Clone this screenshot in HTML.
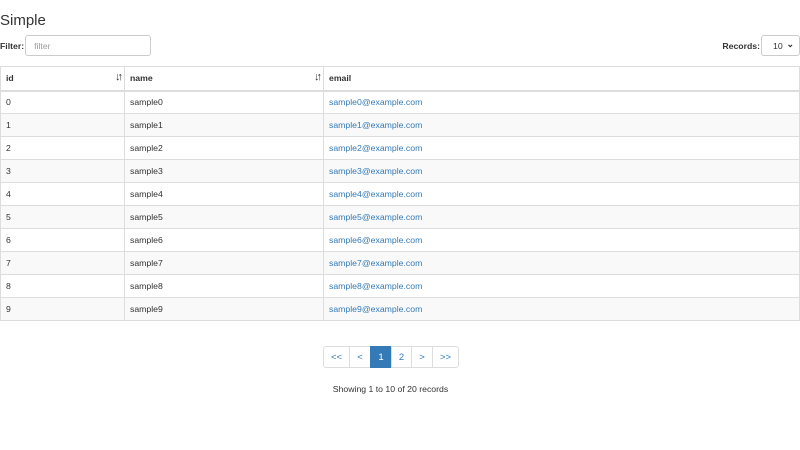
<!DOCTYPE html>
<html><head><style>
*{box-sizing:border-box}
body{margin:0;width:800px;height:450px;font-family:"Liberation Sans",sans-serif;font-size:8.7px;color:#333;background:#fff;position:relative}
h1{position:absolute;left:0;top:12px;margin:0;font-size:15px;font-weight:normal}
.filter{position:absolute;left:0;top:35px;height:21px;display:flex;align-items:center;font-weight:bold}
.filter div{margin-left:1px;width:126px;height:21px;border:1px solid #ccc;border-radius:3px;color:#999;font-weight:normal;padding:5px 8px}
.rec{position:absolute;right:0;top:35px;height:21px;display:flex;align-items:center;font-weight:bold}
.rec div{margin-left:1px;width:39px;height:21px;border:1px solid #ccc;border-radius:3px;font-weight:normal;padding:5px 0 0 11px;position:relative}
.rec div span{position:absolute;right:5px;top:3px;font-size:9px;font-weight:bold}
table{position:absolute;left:0;top:66px;width:800px;border-collapse:collapse}
td,th{border:1px solid #ddd;height:23px;padding:0 5px;text-align:left;vertical-align:middle}
th{border-bottom:2px solid #ddd;height:24px;position:relative}
th .s{position:absolute;right:4px;top:4px;font-size:11px;letter-spacing:-3px;font-weight:bold;color:#333}
tr:nth-child(odd) td{background:#f9f9f9}
a{color:#337ab7;text-decoration:none}
.pg{position:absolute;left:323px;top:346px;display:flex}
.pg span{height:22px;border:1px solid #ddd;margin-left:-1px;display:flex;align-items:center;justify-content:center;color:#337ab7;font-size:9.5px}
.pg span.a{background:#337ab7;border-color:#337ab7;color:#fff}
.pg span:first-child{margin-left:0;border-radius:3px 0 0 3px}
.pg span:last-child{border-radius:0 3px 3px 0}
.info{position:absolute;left:0;width:781px;text-align:center;top:384px}
</style></head><body>
<h1>Simple</h1>
<div class="filter">Filter:<div>filter</div></div>
<div class="rec">Records:<div>10<span>&#8964;</span></div></div>
<table>
<tr><th style="width:124px">id<span class="s">↓↑</span></th><th style="width:199px">name<span class="s">↓↑</span></th><th>email</th></tr>
<tr><td>0</td><td>sample0</td><td><a>sample0@example.com</a></td></tr>
<tr><td>1</td><td>sample1</td><td><a>sample1@example.com</a></td></tr>
<tr><td>2</td><td>sample2</td><td><a>sample2@example.com</a></td></tr>
<tr><td>3</td><td>sample3</td><td><a>sample3@example.com</a></td></tr>
<tr><td>4</td><td>sample4</td><td><a>sample4@example.com</a></td></tr>
<tr><td>5</td><td>sample5</td><td><a>sample5@example.com</a></td></tr>
<tr><td>6</td><td>sample6</td><td><a>sample6@example.com</a></td></tr>
<tr><td>7</td><td>sample7</td><td><a>sample7@example.com</a></td></tr>
<tr><td>8</td><td>sample8</td><td><a>sample8@example.com</a></td></tr>
<tr><td>9</td><td>sample9</td><td><a>sample9@example.com</a></td></tr>
</table>
<div class="pg"><span style="width:27px">&lt;&lt;</span><span style="width:22px">&lt;</span><span class="a" style="width:22px">1</span><span style="width:21px">2</span><span style="width:22px">&gt;</span><span style="width:27px">&gt;&gt;</span></div>
<div class="info">Showing 1 to 10 of 20 records</div>
</body></html>
